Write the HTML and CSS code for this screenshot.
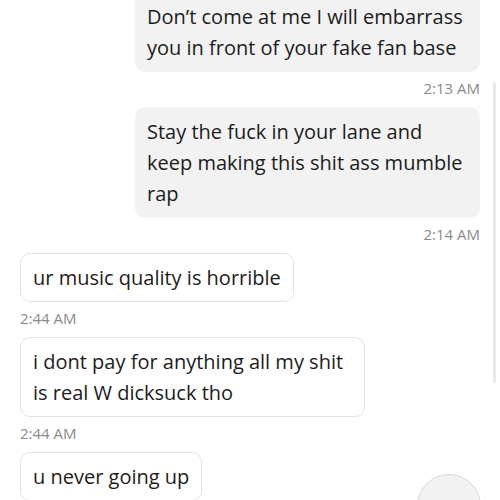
FILE: index.html
```html
<!DOCTYPE html>
<html>
<head>
<meta charset="utf-8">
<link rel="stylesheet" href="styles.css">
</head>
<body>
<div class="chat">
  <div class="msg out">
    <div class="bubble">Don’t come at me I will embarrass you in front of your fake fan base</div>
    <div class="time">2:13 AM</div>
  </div>
  <div class="msg out">
    <div class="bubble">Stay the fuck in your lane and keep making this shit ass mumble rap</div>
    <div class="time">2:14 AM</div>
  </div>
  <div class="msg in">
    <div class="bubble">ur music quality is horrible</div>
    <div class="time">2:44 AM</div>
  </div>
  <div class="msg in">
    <div class="bubble">i dont pay for anything all my shit is real W dicksuck tho</div>
    <div class="time">2:44 AM</div>
  </div>
  <div class="msg in">
    <div class="bubble">u never going up</div>
  </div>
</div>
<div class="scrollbar"></div>
<div class="fab"></div>
</body>
</html>
```
FILE: styles.css
```css
html, body {
  margin: 0;
  padding: 0;
  background: #ffffff;
  overflow: hidden;
  width: 500px;
  height: 500px;
}
body {
  font-family: "Open Sans", "Liberation Sans", sans-serif;
  color: #1c1c1c;
  position: relative;
}
.chat {
  display: flex;
  flex-direction: column;
  padding: 0 20px;
  margin-top: -8px;
}
.msg {
  display: flex;
  flex-direction: column;
  margin-bottom: 10px;
}
.msg.out {
  align-items: flex-end;
}
.msg.in {
  align-items: flex-start;
}
.bubble {
  font-size: 20px;
  line-height: 31px;
  padding: 9px 12px;
  border-radius: 10px;
  box-sizing: border-box;
}
.out .bubble {
  background: #f2f2f2;
  max-width: 345px;
}
.in .bubble {
  background: #ffffff;
  border: 1px solid #e2e2e2;
  padding: 8px 12px;
  max-width: 345px;
}
.time {
  font-size: 15px;
  line-height: 18px;
  color: #8a8a8a;
  margin-top: 7px;
}
.scrollbar {
  position: absolute;
  left: 493px;
  top: 82px;
  width: 3px;
  height: 301px;
  background: #e8e8e8;
  border-radius: 2px;
}
.fab {
  position: absolute;
  left: 417px;
  top: 474px;
  width: 64px;
  height: 64px;
  border-radius: 50%;
  background: #f2f2f2;
  border: 1px solid #d8d8d8;
  box-sizing: border-box;
}
```
